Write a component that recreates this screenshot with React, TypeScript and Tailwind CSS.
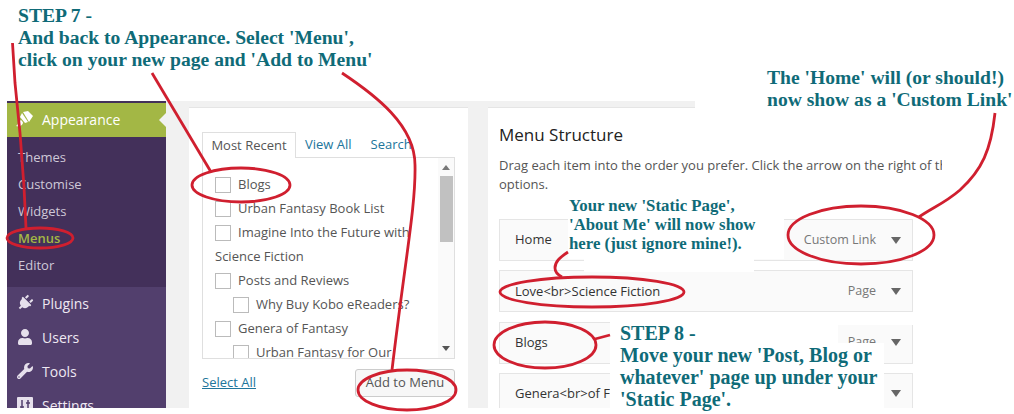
import { FaPlug, FaUser, FaWrench } from "react-icons/fa";

const SUB_ITEMS = ["Themes", "Customise", "Widgets", "Menus", "Editor"];

const PAGES: { label: string; child?: boolean; bare?: boolean }[] = [
  { label: "Blogs" },
  { label: "Urban Fantasy Book List" },
  { label: "Imagine Into the Future with" },
  { label: "Science Fiction", bare: true },
  { label: "Posts and Reviews" },
  { label: "Why Buy Kobo eReaders?", child: true },
  { label: "Genera of Fantasy" },
  { label: "Urban Fantasy for Our", child: true },
];

function NavItem({ icon, label }: { icon: React.ReactNode; label: string }) {
  return (
    <div className="flex h-[34px] shrink-0 items-center text-[14px] text-[#eee8f2]">
      <span className="flex w-[35px] justify-center pl-[1px] text-[#e6e0ec]">{icon}</span>
      {label}
    </div>
  );
}

function Sidebar() {
  return (
    <div className="flex w-[159px] shrink-0 flex-col overflow-hidden border-t-2 border-[#43305a] bg-[#523f6d]">
      <div className="relative flex h-[34px] shrink-0 items-center bg-[#a3b745] pb-[2px] text-[14px] text-white">
        <span className="flex w-[35px] justify-center text-white">
          <svg width="20" height="20" viewBox="0 0 20 20" fill="currentColor">
            <path d="M8 3 L13 2 L18 7 L14 13 Z" />
            <path d="M7 4 L13 13 L10 14 L5 8 Z" />
            <path d="M6 11 C7 12 8 13 8 14 C7 17 4 18 1 17 C3 16 3 13 6 11 Z" />
          </svg>
        </span>
        Appearance
        <span className="absolute right-0 top-[10px] h-0 w-0 border-y-[7px] border-r-[7px] border-y-transparent border-r-[#f1f1f1]" />
      </div>
      <div className="flex h-[150px] shrink-0 flex-col bg-[#43305a] pl-[11px] pt-[7px]">
        {SUB_ITEMS.map((item) => (
          <div
            key={item}
            className={`flex h-[27px] shrink-0 items-center text-[13px] ${
              item === "Menus" ? "font-semibold text-[#a3b745]" : "text-[#cfc8d8]"
            }`}
          >
            {item}
          </div>
        ))}
      </div>
      <div className="-mt-[1px]">
        <NavItem icon={<FaPlug size={16} className="rotate-45" />} label="Plugins" />
        <NavItem icon={<FaUser size={16} />} label="Users" />
        <NavItem icon={<FaWrench size={16} />} label="Tools" />
        <NavItem
          icon={
            <svg width="16" height="16" viewBox="0 0 16 16">
              <rect width="16" height="16" rx="1" fill="#e6e0ec" />
              <path d="M5 3v10M11 3v10M3 10h4M9 6h4" stroke="#523f6d" strokeWidth="1.5" />
            </svg>
          }
          label="Settings"
        />
      </div>
    </div>
  );
}

function PagesPanel() {
  return (
    <div className="ml-[23px] mt-[6px] w-[279px] shrink-0 border-t border-[#e5e5e5] bg-white pl-[13px] pr-[13px] pt-[24px] text-[13px] text-[#555]">
      <div className="flex h-[25px] items-end">
        <div className="-mb-[1px] flex h-[26px] w-[94px] items-center justify-center border border-b-0 border-[#dfdfdf] bg-white text-[#555]">
          Most Recent
        </div>
        <span className="ml-[9px] self-center text-[#21759b]">View All</span>
        <span className="ml-[19px] self-center text-[#21759b]">Search</span>
      </div>
      <div className="flex h-[202px] w-[253px] overflow-hidden border border-[#dfdfdf] pl-[12px]">
        <div className="flex-1 pt-[15px]">
          {PAGES.map((page) => (
            <div
              key={page.label}
              className={`flex h-[24px] items-center gap-[7px] whitespace-nowrap ${page.child ? "pl-[18px]" : ""}`}
            >
              {!page.bare && <span className="h-[16px] w-[16px] shrink-0 border border-[#bbb] bg-white" />}
              {page.label}
            </div>
          ))}
        </div>
        <div className="flex w-[16px] shrink-0 flex-col items-center bg-[#fafafa] pt-[7px]">
          <span className="h-0 w-0 border-x-[4px] border-b-[5px] border-x-transparent border-b-[#777]" />
          <span className="mt-[6px] h-[66px] w-[13px] bg-[#c1c1c1]" />
          <span className="mt-[104px] h-0 w-0 border-x-[4px] border-t-[5px] border-x-transparent border-t-[#555]" />
        </div>
      </div>
      <div className="mt-[10px] flex items-center justify-between">
        <span className="text-[#21759b] underline">Select All</span>
        <span className="flex h-[28px] w-[100px] items-center justify-center rounded-[3px] border border-[#ccc] bg-[#f7f7f7] text-[#555]">
          Add to Menu
        </span>
      </div>
    </div>
  );
}

function MenuRow({ title, kind }: { title: string; kind: string }) {
  return (
    <div className="flex h-[42px] w-[414px] shrink-0 items-center border border-[#e5e5e5] bg-[#fafafa] pl-[15px] pr-[11px] text-[13px] text-[#333]">
      <span className="flex-1 whitespace-nowrap">{title}</span>
      <span className="text-[12.5px] text-[#777]">{kind}</span>
      <span className="ml-[15px] h-0 w-0 border-x-[5px] border-t-[7px] border-x-transparent border-t-[#666]" />
    </div>
  );
}

function StructurePanel() {
  return (
    <div className="ml-[20px] flex-1 bg-white">
      <div className="h-[7px] w-[207px] border-b border-[#e5e5e5] bg-[#f1f1f1]" />
      <div className="pl-[11px] pt-[15px]">
        <h3 className="text-[17px] leading-[24px] text-[#222]">Menu Structure</h3>
        <div className="mt-[9px] w-[443px] overflow-hidden whitespace-nowrap text-[13px] leading-[19px] text-[#555]">
          <div>Drag each item into the order you prefer. Click the arrow on the right of the menu item</div>
          <div>options.</div>
        </div>
        <div className="mt-[25px] flex flex-col gap-[9.3px]">
          <MenuRow title="Home" kind="Custom Link" />
          <MenuRow title="Love<br>Science Fiction" kind="Page" />
          <MenuRow title="Blogs" kind="Page" />
          <MenuRow title="Genera<br>of Fantasy" kind="Page" />
        </div>
      </div>
    </div>
  );
}

const noteClass =
  "absolute whitespace-nowrap bg-white font-['Liberation_Serif',serif] font-bold text-[#0f6b78]";

function Annotations() {
  return (
    <>
      {/* white boxes pasted over the screenshot under each note */}
      <div className="absolute left-[584px] top-[259px] h-[13px] w-[170px] bg-white" />
      <div className="absolute left-[837px] top-[320px] h-[5px] w-[78px] bg-white" />
      <div className="absolute left-[837px] top-[343px] h-[19px] w-[47px] bg-white" />
      <div className="absolute left-[837px] top-[362px] h-[46px] w-[47px] bg-white" />

      <div className={`${noteClass} left-[568px] top-[196px] h-[63px] w-[216px] pl-[1px] text-[16.8px] leading-[19px]`}>
        Your new 'Static Page',
        <br />
        'About Me' will now show
        <br />
        here (just ignore mine!).
      </div>
      <div className={`${noteClass} left-[610px] top-[320px] h-[88px] w-[228px] overflow-visible pl-[10px] pt-[2px] text-[20px] leading-[22px]`}>
        STEP 8 -
        <br />
        Move your new 'Post, Blog or
        <br />
        whatever' page up under your
        <br />
        'Static Page'.
      </div>
      <div className={`${noteClass} left-[18px] top-[5px] text-[19.6px] leading-[22px]`}>
        STEP 7 -
        <br />
        And back to Appearance. Select 'Menu',
        <br />
        click on your new page and 'Add to Menu'
      </div>
      <div className={`${noteClass} left-[767px] top-[67px] text-[19.6px] leading-[22px]`}>
        The 'Home' will (or should!)
        <br />
        now show as a 'Custom Link'
      </div>

      {/* red marker strokes */}
      <svg className="absolute left-0 top-0" width="1014" height="414" fill="none" stroke="#d01f2f" strokeWidth="2.8">
        <path d="M12.5 43 L15 83 L20 133 L24 187 L26 228" />
        <ellipse cx="40" cy="238" rx="33" ry="10" />
        <path d="M152 73 L211 172" />
        <ellipse cx="241" cy="185" rx="49" ry="17" />
        <path d="M342 73 C375 95 415 125 415 165 C416 205 405 260 392 370" />
        <ellipse cx="407" cy="390" rx="49" ry="20" />
        <path d="M995 113 C991 150 982 170 960 190 C945 203 932 208 919 217" />
        <ellipse cx="861" cy="235" rx="73" ry="29" />
        <path d="M568 252 C559 258 555 262 555 268 C555 272 558 275 562 277" />
        <ellipse cx="592" cy="292" rx="92" ry="15" />
        <ellipse cx="545" cy="345" rx="51" ry="23" />
        <path d="M595 339 L610 335" />
      </svg>
    </>
  );
}

export default function App() {
  return (
    <div className="relative h-[414px] w-[1014px] overflow-hidden bg-white font-['Open_Sans',sans-serif]">
      <div className="ml-[7px] mt-[101px] flex h-[307px] overflow-hidden">
        <Sidebar />
        <div className="flex flex-1 bg-[linear-gradient(to_right,#f1f1f1_322px,white_322px)]">
          <PagesPanel />
          <StructurePanel />
        </div>
      </div>
      <Annotations />
    </div>
  );
}
